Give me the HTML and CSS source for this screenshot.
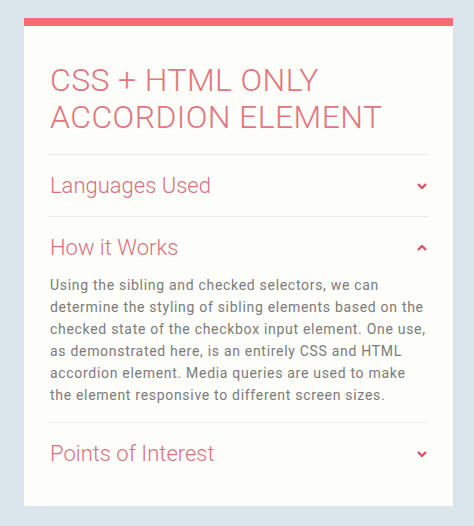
FILE: index.html
```html
<!DOCTYPE html>
<html lang="en">
<head>
    <meta charset="UTF-8">
    <meta name="viewport" content="width=device-width, initial-scale=1.0">
    <title>CSS + HTML Only Accordion</title>
    <link rel="stylesheet" href="styles.css">
</head>
<body>

    <div class="accordion">
        <h1>CSS + HTML ONLY<br>ACCORDION ELEMENT</h1>

        <div class="item">
            <input type="checkbox" id="item-1">
            <label for="item-1">
                <span>Languages Used</span>
                <svg class="chevron" viewBox="0 0 10 6"><path d="M1 1 L5 5 L9 1"/></svg>
            </label>
            <p>This page was written using only HTML and CSS. No JavaScript is needed to open or close the panels.</p>
        </div>

        <div class="item">
            <input type="checkbox" id="item-2" checked>
            <label for="item-2">
                <span>How it Works</span>
                <svg class="chevron" viewBox="0 0 10 6"><path d="M1 1 L5 5 L9 1"/></svg>
            </label>
            <p>Using the sibling and checked selectors, we can determine the styling of sibling elements based on the checked state of the checkbox input element. One use, as demonstrated here, is an entirely CSS and HTML accordion element. Media queries are used to make the element responsive to different screen sizes.</p>
        </div>

        <div class="item">
            <input type="checkbox" id="item-3">
            <label for="item-3">
                <span>Points of Interest</span>
                <svg class="chevron" viewBox="0 0 10 6"><path d="M1 1 L5 5 L9 1"/></svg>
            </label>
            <p>The arrows flip when a panel is open, and the layout scales down on small screens.</p>
        </div>
    </div>

</body>
</html>
```

FILE: styles.css
```css
body {
    font-family: Roboto, Arial, sans-serif;
    margin: 0;
    padding: 18px 0 0 24px;
    background-color: #dbe5ec;
    min-height: 100vh;
    box-sizing: border-box;
}
.accordion {
    width: 429px;
    box-sizing: border-box;
    background: #fdfdf9;
    border-top: 8px solid #f56b73;
    padding: 36px 25px 22px 24px;
}
h1 {
    margin: 0 0 18px 2px;
    font-size: 32px;
    font-weight: 300;
    line-height: 37px;
    letter-spacing: 0.4px;
    color: #e27680;
}
.item {
    border-top: 1px solid #ecece6;
}
.item input {
    display: none;
}
.item label {
    display: flex;
    align-items: center;
    justify-content: space-between;
    height: 61px;
    padding: 0 2px;
    font-size: 22px;
    font-weight: 300;
    color: #d9717e;
    cursor: pointer;
}
.chevron {
    width: 10px;
    height: 6px;
    margin-right: -1px;
    fill: none;
    stroke: #e05069;
    stroke-width: 2.4;
}
.item p {
    display: none;
    margin: -4px 0 16px 2px;
    font-size: 14px;
    line-height: 22px;
    letter-spacing: 0.7px;
    color: #7b7b7b;
}
.item input:checked ~ p {
    display: block;
}
.item input:checked + label .chevron {
    transform: rotate(180deg);
}
```
